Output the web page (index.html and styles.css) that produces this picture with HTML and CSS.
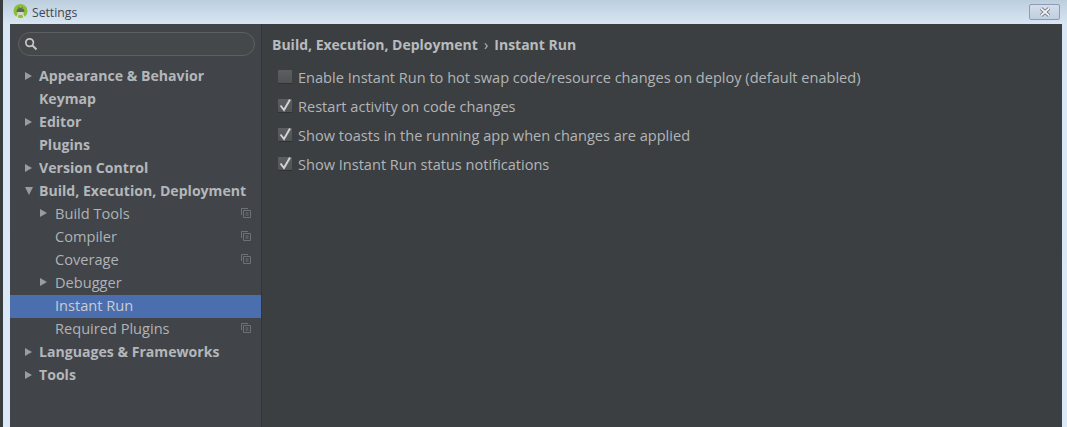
FILE: index.html
```html
<!DOCTYPE html>
<html lang="en">
<head>
<meta charset="utf-8">
<title>Settings</title>
<link rel="stylesheet" href="styles.css">
</head>
<body>
<div class="desktop">
  <div class="window">
    <header class="titlebar">
      <svg class="app-icon" width="15" height="16" viewBox="0 0 15 16"><circle cx="7.5" cy="7" r="7" fill="#8cbc3c"/><path d="M3.6 8a3.9 3.9 0 0 1 7.8 0z" fill="#5c6b50"/><path d="M5.5 3l1 1.5M9.5 3l-1 1.5" stroke="#5c6b50"/><rect x="4.4" y="8" width="6.2" height="3" fill="#cfd8c8"/><path d="M5 11L2.8 15.5M10 11l2.2 4.500" stroke="#e4e8e0" stroke-width="1.2"/></svg>
      <span class="title">Settings</span>
      <button class="close" aria-label="Close"><svg width="12" height="10" viewBox="0 0 12 10"><path d="M2 1.500l8 7M10 1.500l-8 7" stroke="#5d6570" stroke-width="3.400"/><path d="M2 1.500l8 7M10 1.500l-8 7" stroke="#f2f4f7" stroke-width="1.800"/></svg></button>
    </header>
    <div class="client">
      <aside class="sidebar">
        <div class="search"><svg width="14" height="14" viewBox="0 0 14 14"><circle cx="5.600" cy="5.600" r="3.800" fill="none" stroke="#c4c6c8" stroke-width="1.700"/><path d="M8.500 8.500l4 4" stroke="#c4c6c8" stroke-width="2"/></svg></div>
        <nav class="tree">
          <div class="row top"><i class="arrow"></i>Appearance &amp; Behavior</div>
          <div class="row top"><i class="arrow none"></i>Keymap</div>
          <div class="row top"><i class="arrow"></i>Editor</div>
          <div class="row top"><i class="arrow none"></i>Plugins</div>
          <div class="row top"><i class="arrow"></i>Version Control</div>
          <div class="row top"><i class="arrow down"></i>Build, Execution, Deployment</div>
          <div class="row sub"><i class="arrow"></i>Build Tools<svg class="copy" width="10" height="10" viewBox="0 0 10 10"><path d="M.5 7V.5H7M2.500 2.500h7v7h-7zM4.500 5h3M4.500 7h3" fill="none" stroke="#6e7276"/></svg></div>
          <div class="row sub"><i class="arrow none"></i>Compiler<svg class="copy" width="10" height="10" viewBox="0 0 10 10"><path d="M.5 7V.5H7M2.500 2.500h7v7h-7zM4.500 5h3M4.500 7h3" fill="none" stroke="#6e7276"/></svg></div>
          <div class="row sub"><i class="arrow none"></i>Coverage<svg class="copy" width="10" height="10" viewBox="0 0 10 10"><path d="M.5 7V.5H7M2.500 2.500h7v7h-7zM4.500 5h3M4.500 7h3" fill="none" stroke="#6e7276"/></svg></div>
          <div class="row sub"><i class="arrow"></i>Debugger</div>
          <div class="row sub selected"><i class="arrow none"></i>Instant Run</div>
          <div class="row sub"><i class="arrow none"></i>Required Plugins<svg class="copy" width="10" height="10" viewBox="0 0 10 10"><path d="M.5 7V.5H7M2.500 2.500h7v7h-7zM4.500 5h3M4.500 7h3" fill="none" stroke="#6e7276"/></svg></div>
          <div class="row top"><i class="arrow"></i>Languages &amp; Frameworks</div>
          <div class="row top"><i class="arrow"></i>Tools</div>
        </nav>
      </aside>
      <main class="content">
        <h1 class="crumb">Build, Execution, Deployment <span class="sep">›</span> Instant Run</h1>
        <div class="options">
          <div class="option"><span class="box"></span>Enable Instant Run to hot swap code/resource changes on deploy (default enabled)</div>
          <div class="option"><span class="box"><svg width="14" height="16" viewBox="0 0 14 16"><path d="M2.500 8.500l3.500 4.500L12 2.500" fill="none" stroke="#d0d2d4" stroke-width="2"/></svg></span>Restart activity on code changes</div>
          <div class="option"><span class="box"><svg width="14" height="16" viewBox="0 0 14 16"><path d="M2.500 8.500l3.500 4.500L12 2.500" fill="none" stroke="#d0d2d4" stroke-width="2"/></svg></span>Show toasts in the running app when changes are applied</div>
          <div class="option"><span class="box"><svg width="14" height="16" viewBox="0 0 14 16"><path d="M2.500 8.500l3.500 4.500L12 2.500" fill="none" stroke="#d0d2d4" stroke-width="2"/></svg></span>Show Instant Run status notifications</div>
        </div>
      </main>
    </div>
  </div>
</div>
</body>
</html>
```
FILE: styles.css
```css
* { box-sizing: border-box; }
html, body { margin: 0; height: 100%; overflow: hidden; }
body { background: #3a3d40; font-family: "Open Sans", "Noto Sans", sans-serif; }
.desktop { height: 427px; padding-left: 3px; }
.window { height: 100%; display: flex; flex-direction: column; padding: 0 5px 0 7px; background: linear-gradient(#bccedd 0, #d9e6f3 24px, #dce9f6 100%); }
.titlebar { height: 24px; flex: none; display: flex; align-items: center; margin-left: -7px; padding-left: 10px; }
.app-icon { flex: none; margin-top: -1px; }
.title { margin-left: 4px; font-size: 12.2px; color: #3d4650; margin-top: 1px; }
.close { margin-left: auto; margin-right: 2px; width: 31px; height: 16px; padding: 0; display: flex; align-items: center; justify-content: center; border: 1px solid #8e9bb5; border-radius: 2px; background: linear-gradient(#d3deea, #c0cede); }
.client { flex: 1; display: flex; min-height: 0; background: #3c3f41; }
.sidebar { width: 252px; flex: none; background: #414449; border-right: 1px solid #333639; padding-top: 8px; }
.search { margin: 0 6px 0 8px; height: 24px; border: 1px solid #5e6060; border-radius: 12px; background: #45484a; display: flex; align-items: center; padding-left: 5px; }
.tree { margin-top: 9px; }
.row { height: 23px; padding-bottom: 2px; display: flex; align-items: center; font-size: 14.6px; color: #b0b3b6; white-space: nowrap; }
.top { font-weight: 700; font-size: 14.1px; padding-left: 15px; color: #b4b7ba; }
.sub { padding-left: 30px; padding-bottom: 4px; }
.selected { background: #4b6eaf; color: #c8ccd2; }
.arrow { width: 0; height: 0; flex: none; margin-right: 7px; border-left: 7px solid #9a9c9e; border-top: 4.5px solid transparent; border-bottom: 4.5px solid transparent; }
.arrow.none { border-left-color: transparent; }
.arrow.down { border-left: 4.5px solid transparent; border-right: 4.5px solid transparent; border-top: 8px solid #9a9c9e; border-bottom: 0; margin-right: 6px; }
.sub .arrow { margin-right: 8px; }
.sub .arrow.none { width: 15px; margin-right: 0; border: 0; }
.top .arrow.none { border: 0; width: 14px; margin-right: 0; }
.copy { margin-left: auto; margin-right: 10px; flex: none; }
.content { flex: 1; padding: 10px 0 0 10px; color: #b2b5b8; }
.crumb { margin: 0; font-size: 14px; font-weight: 700; line-height: 22px; color: #b8bbbe; }
.sep { font-weight: 400; padding: 0 2.5px; }
.options { margin-top: 6px; padding-left: 6px; }
.option { height: 29px; display: flex; align-items: center; font-size: 14.57px; white-space: nowrap; }
.box { width: 14px; height: 14px; flex: none; margin-right: 6px; background: linear-gradient(#5c5e60, #505254); border-bottom: 1px solid #2f3133; border-radius: 1px; }
.box svg { display: block; margin-top: -2px; }
```
